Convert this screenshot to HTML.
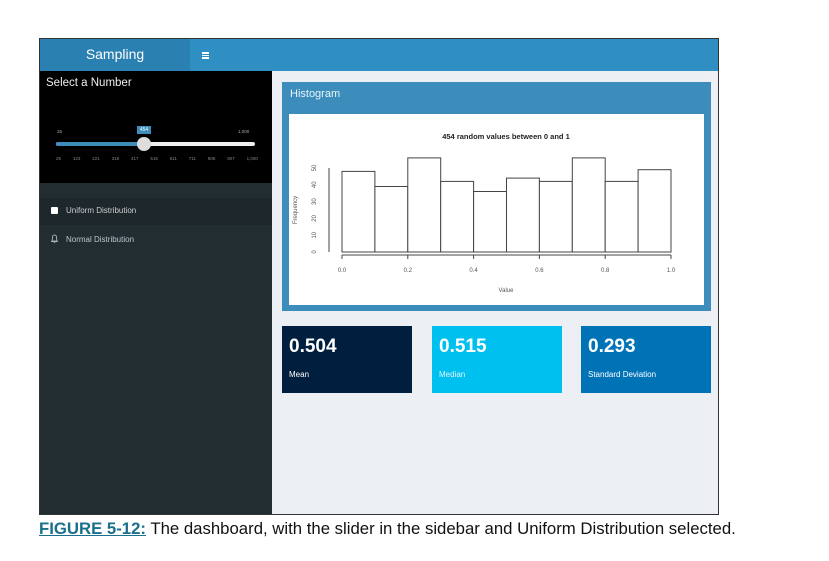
<!DOCTYPE html>
<html><head><meta charset="utf-8"><style>
body{margin:0;width:829px;height:561px;background:#fff;position:relative;overflow:hidden;font-family:"Liberation Sans",sans-serif}
.a{position:absolute}
</style></head><body>
<div class="a" style="left:39px;top:38px;width:680px;height:477px;border:1px solid #333;box-sizing:border-box;background:#ecf0f5"></div>
<div class="a" style="left:40px;top:39px;width:678px;height:32px;background:#2f8fc2"></div>
<div class="a" style="left:40px;top:39px;width:150px;height:32px;background:#2b80b2;color:#fff;font-size:14px;text-align:center;line-height:31px">Sampling</div>
<div class="a" style="left:202px;top:52px;width:7px;height:1.5px;background:#fff"></div>
<div class="a" style="left:202px;top:54.5px;width:7px;height:1.5px;background:#fff"></div>
<div class="a" style="left:202px;top:57px;width:7px;height:1.5px;background:#fff"></div>
<div class="a" style="left:40px;top:71px;width:232px;height:443px;background:#222d32"></div>
<div class="a" style="left:40px;top:71px;width:232px;height:112px;background:#000"></div>
<div class="a" style="left:46px;top:77px;color:#eee;font-size:11.5px">Select a Number</div>
<div class="a" style="left:57px;top:129px;color:#aaa;font-size:4.5px">25</div>
<div class="a" style="left:238px;top:129px;color:#aaa;font-size:4.5px">1,000</div>
<div class="a" style="left:137px;top:126px;width:14px;height:8px;background:#3c8dbc;color:#fff;font-size:5px;text-align:center;line-height:8px">454</div>
<div class="a" style="left:56px;top:142px;width:199px;height:4px;border-radius:2px;background:#eee"></div>
<div class="a" style="left:56px;top:142px;width:88px;height:4px;border-radius:2px;background:#3c8dbc"></div>
<div class="a" style="left:137px;top:137px;width:14px;height:14px;border-radius:50%;background:#ddd"></div>
<div class="a" style="left:56px;top:156px;width:202px;color:#888;font-size:4.5px;display:flex;justify-content:space-between"><span>25</span><span>123</span><span>221</span><span>318</span><span>417</span><span>515</span><span>611</span><span>711</span><span>806</span><span>907</span><span>1,000</span></div>
<div class="a" style="left:40px;top:198px;width:232px;height:27px;background:#1e282c"></div>
<div class="a" style="left:51px;top:207px;width:7px;height:7px;background:#fff;border-radius:1px"></div>
<div class="a" style="left:66px;top:206px;color:#ccc;font-size:8px">Uniform Distribution</div>
<svg class="a" style="left:50px;top:234px" width="9" height="10"><path d="M2 7 Q2.5 5 2.5 3.5 Q2.5 1 4.5 1 Q6.5 1 6.5 3.5 Q6.5 5 7 7 Z M1 7.5 H8 M3.8 8.5 H5.2" fill="none" stroke="#b8c7ce" stroke-width="0.8"/></svg>
<div class="a" style="left:66px;top:235px;color:#b8c7ce;font-size:8px">Normal Distribution</div>
<div class="a" style="left:282px;top:82px;width:429px;height:229px;background:#3c8dbc"></div>
<div class="a" style="left:290px;top:88px;color:#e8f4fa;font-size:11px">Histogram</div>
<div class="a" style="left:289px;top:114px;width:415px;height:191px;background:#fff"></div>
<svg class="a" style="left:0;top:0" width="829" height="561">
<text x="506" y="139" font-size="7.5" font-weight="bold" text-anchor="middle" font-family="Liberation Sans" fill="#222">454 random values between 0 and 1</text>
<g fill="#fff" stroke="#444" stroke-width="1">
<rect x="342" y="171.4" width="32.9" height="80.6"/>
<rect x="374.9" y="186.5" width="32.9" height="65.5"/>
<rect x="407.8" y="157.9" width="32.9" height="94.1"/>
<rect x="440.7" y="181.4" width="32.9" height="70.6"/>
<rect x="473.6" y="191.5" width="32.9" height="60.5"/>
<rect x="506.5" y="178.1" width="32.9" height="73.9"/>
<rect x="539.4" y="181.4" width="32.9" height="70.6"/>
<rect x="572.3" y="157.9" width="32.9" height="94.1"/>
<rect x="605.2" y="181.4" width="32.9" height="70.6"/>
<rect x="638.1" y="169.7" width="32.9" height="82.3"/>
</g>
<g stroke="#444" stroke-width="1"><line x1="342" y1="255" x2="671" y2="255"/>
<line x1="342" y1="255" x2="342" y2="259"/><line x1="407.8" y1="255" x2="407.8" y2="259"/><line x1="473.6" y1="255" x2="473.6" y2="259"/><line x1="539.4" y1="255" x2="539.4" y2="259"/><line x1="605.2" y1="255" x2="605.2" y2="259"/><line x1="671" y1="255" x2="671" y2="259"/>
<line x1="329" y1="168" x2="329" y2="252"/></g>
<g font-size="6" fill="#555" font-family="Liberation Sans" text-anchor="middle"><text x="342" y="272">0.0</text><text x="407.8" y="272">0.2</text><text x="473.6" y="272">0.4</text><text x="539.4" y="272">0.6</text><text x="605.2" y="272">0.8</text><text x="671" y="272">1.0</text><text x="506" y="292">Value</text></g>
<g font-size="6" fill="#555" font-family="Liberation Sans" text-anchor="middle">
<text transform="translate(316,252) rotate(-90)">0</text><text transform="translate(316,235.2) rotate(-90)">10</text><text transform="translate(316,218.4) rotate(-90)">20</text><text transform="translate(316,201.6) rotate(-90)">30</text><text transform="translate(316,184.8) rotate(-90)">40</text><text transform="translate(316,168) rotate(-90)">50</text>
<text transform="translate(297,210) rotate(-90)">Frequency</text></g>
</svg>
<div class="a" style="left:282px;top:326px;width:130px;height:67px;background:#001f3f"></div>
<div class="a" style="left:432px;top:326px;width:130px;height:67px;background:#00c0ef"></div>
<div class="a" style="left:581px;top:326px;width:130px;height:67px;background:#0073b7"></div>
<div class="a" style="left:289px;top:336px;color:#fff;font-size:19px;font-weight:bold">0.504</div>
<div class="a" style="left:439px;top:336px;color:#fff;font-size:19px;font-weight:bold">0.515</div>
<div class="a" style="left:588px;top:336px;color:#fff;font-size:19px;font-weight:bold">0.293</div>
<div class="a" style="left:289px;top:370px;color:#fff;font-size:8px">Mean</div>
<div class="a" style="left:439px;top:370px;color:#e0f6fd;font-size:8px">Median</div>
<div class="a" style="left:588px;top:370px;color:#fff;font-size:8px">Standard Deviation</div>
<div class="a" style="left:39px;top:519px;font-size:17px;color:#111;white-space:nowrap;transform:scaleX(0.985);transform-origin:left"><span style="color:#1a6f8c;text-decoration:underline;font-weight:bold">FIGURE 5-12:</span> The dashboard, with the slider in the sidebar and Uniform Distribution selected.</div>
</body></html>
